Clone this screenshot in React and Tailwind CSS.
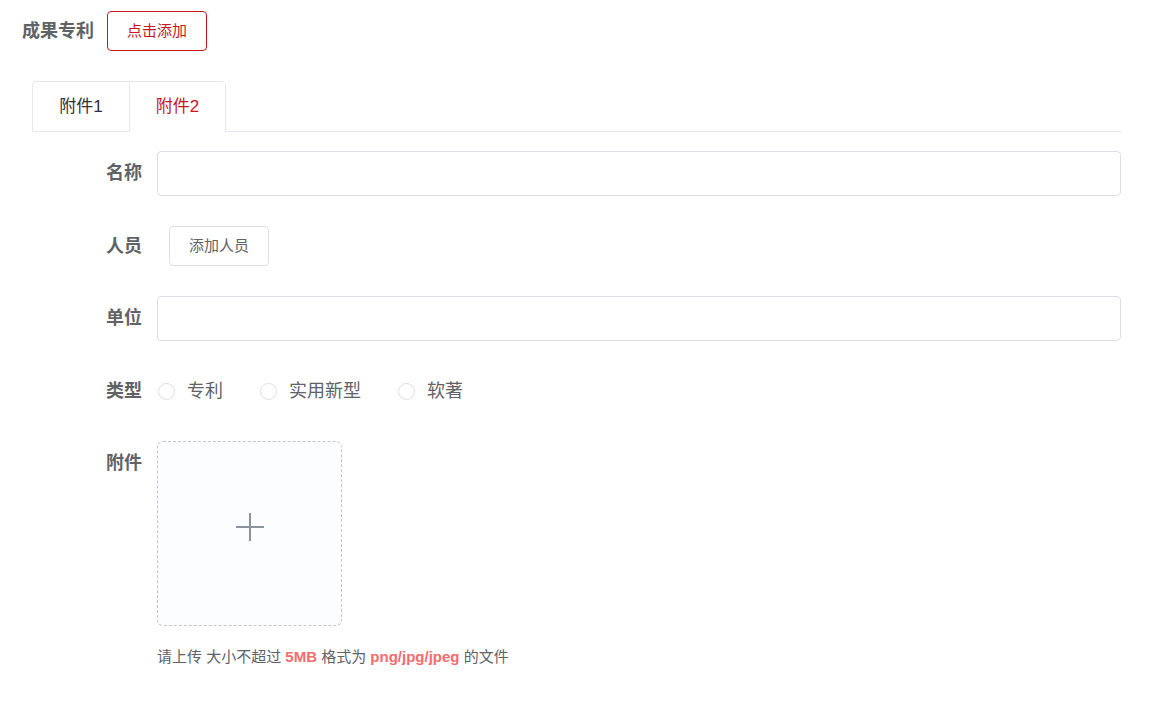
const font = { fontFamily: '"Liberation Sans", "Noto Sans CJK SC", sans-serif' };

const Label = ({ children, className = '' }) => (
  <div className={`w-[125px] shrink-0 pr-[15px] text-right text-[18px] font-bold text-[#606266] ${className}`}>{children}</div>
);

const Radio = ({ label }) => (
  <label className="mr-[37px] flex items-center">
    <span className="h-[17px] w-[17px] rounded-full border border-[#dcdfe6] bg-white"></span>
    <span className="ml-[12px] text-[18px] text-[#606266]">{label}</span>
  </label>
);

export default function App() {
  return (
    <div className="min-h-screen bg-white" style={font}>
      <div className="flex items-center pl-[22px] pt-[11px]">
        <span className="text-[18px] font-bold text-[#606266]">成果专利</span>
        <button className="ml-[13px] h-[40px] w-[100px] rounded border border-[#c8161d] text-[15px] text-[#c8161d]">点击添加</button>
      </div>

      <div className="ml-[32px] mr-[46px] mt-[30px]">
        <div className="flex h-[51px] border-b border-[#e4e7ed]">
          <div className="-mb-px flex rounded-t border border-[#e4e7ed]">
            <div className="flex w-[96px] items-center justify-center text-[17px] text-[#303133]">附件1</div>
            <div className="-mb-px flex w-[96px] items-center justify-center border-l border-b border-[#e4e7ed] border-b-white bg-white text-[17px] text-[#c8161d]">附件2</div>
          </div>
        </div>

        <div className="pt-[19px]">
          <div className="flex items-center">
            <Label>名称</Label>
            <input className="h-[45px] flex-1 rounded border border-[#dcdfe6] px-[15px] outline-none" />
          </div>

          <div className="mt-[30px] flex items-center">
            <Label>人员</Label>
            <button className="ml-[12px] h-[40px] w-[100px] rounded border border-[#dcdfe6] bg-white text-[15px] text-[#606266]">添加人员</button>
          </div>

          <div className="mt-[30px] flex items-center">
            <Label>单位</Label>
            <input className="h-[45px] flex-1 rounded border border-[#dcdfe6] px-[15px] outline-none" />
          </div>

          <div className="mt-[30px] flex h-[40px] items-center">
            <Label>类型</Label>
            <div className="flex items-center pl-px">
              <Radio label="专利" />
              <Radio label="实用新型" />
              <Radio label="软著" />
            </div>
          </div>

          <div className="mt-[30px] flex items-start">
            <Label className="leading-[44px]">附件</Label>
            <div>
              <div className="flex h-[185px] w-[185px] items-center justify-center rounded-md border border-dashed border-[#c0c4cc] bg-[#fbfdff] pb-[14px]">
                <svg width="28" height="28" viewBox="0 0 28 28" fill="none" stroke="#8c939d" strokeWidth="2">
                  <line x1="14" y1="0" x2="14" y2="28" />
                  <line x1="0" y1="14" x2="28" y2="14" />
                </svg>
              </div>
              <div className="mt-[20px] text-[15px] text-[#606266]">
                请上传 大小不超过 <b className="text-[#f56c6c]">5MB</b> 格式为 <b className="text-[#f56c6c]">png/jpg/jpeg</b> 的文件
              </div>
            </div>
          </div>
        </div>
      </div>
    </div>
  );
}
